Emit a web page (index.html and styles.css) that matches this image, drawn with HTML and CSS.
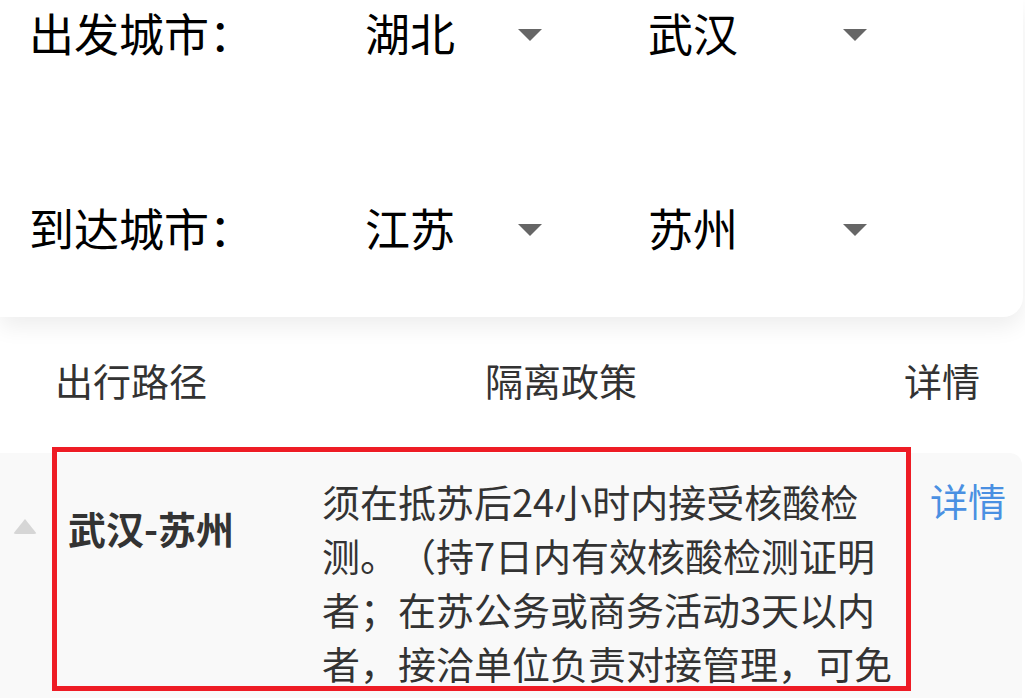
FILE: index.html
```html
<!DOCTYPE html>
<html lang="zh-CN">
<head>
<meta charset="utf-8">
<title>出行政策查询</title>
<link rel="stylesheet" href="styles.css">
</head>
<body>
  <section class="card">
    <div class="form-row">
      <span class="label">出发城市：</span>
      <div class="select narrow"><span>湖北</span><i class="caret"></i></div>
      <div class="select wide"><span>武汉</span><i class="caret"></i></div>
    </div>
    <div class="form-row">
      <span class="label">到达城市：</span>
      <div class="select narrow"><span>江苏</span><i class="caret"></i></div>
      <div class="select wide"><span>苏州</span><i class="caret"></i></div>
    </div>
  </section>

  <div class="thead">
    <span>出行路径</span>
    <span>隔离政策</span>
    <span>详情</span>
  </div>

  <div class="trow">
    <div class="toggle"><i class="up"></i></div>
    <div class="route">武汉-苏州</div>
    <div class="policy">须在抵苏后24小时内接受核酸检测。（持7日内有效核酸检测证明者；在苏公务或商务活动3天以内者，接洽单位负责对接管理，可免于检测）</div>
    <a class="detail">详情</a>
    <div class="highlight"></div>
  </div>
</body>
</html>
```

FILE: styles.css
```css
html, body {
  margin: 0;
  padding: 0;
  background: #ffffff;
}

body {
  width: 1025px;
  height: 698px;
  overflow: hidden;
  font-family: "Noto Sans CJK SC", "Noto Sans", sans-serif;
  color: #333333;
  text-spacing-trim: space-all;
}

/* city picker card */
.card {
  background: #ffffff;
  margin-right: 2px;
  padding-bottom: 60px;
  border-bottom-right-radius: 20px;
  box-shadow: 0 10px 22px rgba(0, 0, 0, 0.07);
  display: flex;
  flex-direction: column;
  gap: 133px;
}

.form-row {
  display: grid;
  grid-template-columns: 336px 283px 217px;
  align-items: center;
  height: 62px;
  padding-left: 29px;
  font-size: 45px;
  color: #000000;
}

.select {
  display: flex;
  align-items: center;
  justify-content: space-between;
}

.select.narrow {
  width: 177px;
}

.select.wide {
  width: 219px;
}

.caret {
  width: 0;
  height: 0;
  border-left: 12px solid transparent;
  border-right: 12px solid transparent;
  border-top: 12px solid #666666;
  margin-top: 4px;
}

/* table header */
.thead {
  display: grid;
  grid-template-columns: 430px 419px auto;
  padding-left: 55px;
  margin-top: 36px;
  margin-bottom: 46px;
  font-size: 38px;
  line-height: 54px;
  color: #333333;
}

/* table row */
.trow {
  position: relative;
  display: grid;
  grid-template-columns: 68px 254px 578px auto;
  align-items: start;
  background: #f9f9f9;
  margin-right: 3px;
  padding-top: 21px;
  border-top-right-radius: 12px;
  font-size: 38px;
  line-height: 54px;
}

.toggle {
  padding-left: 13px;
  padding-top: 45px;
}

.up {
  display: block;
  width: 0;
  height: 0;
  border-left: 12px solid transparent;
  border-right: 12px solid transparent;
  border-bottom: 15px solid #d6d6d6;
  border-radius: 3px;
}

.route {
  font-weight: 700;
  color: #333333;
  padding-top: 27px;
}

.policy {
  color: #333333;
}

.detail {
  padding-left: 30px;
  margin-top: -1px;
  color: #4a90e2;
  cursor: pointer;
}

.highlight {
  position: absolute;
  left: 52px;
  top: -6px;
  width: 859px;
  height: 244px;
  box-sizing: border-box;
  border: 5px solid #ee1c25;
  pointer-events: none;
}
```
